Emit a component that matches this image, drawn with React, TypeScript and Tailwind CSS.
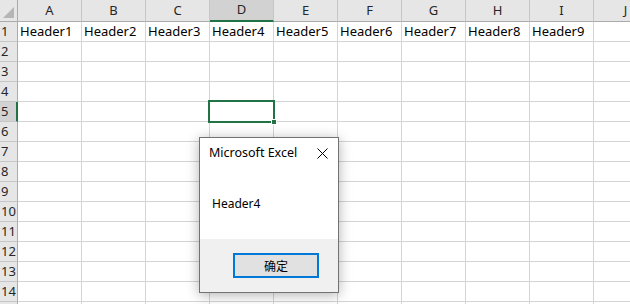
import React from "react";

const COLS = ["A", "B", "C", "D", "E", "F", "G", "H", "I", "J"];
const ROWS = Array.from({ length: 15 }, (_, i) => i + 1);

export default function App() {
  return (
    <div
      className="relative w-[630px] h-[304px] overflow-hidden bg-white"
      style={{ fontFamily: '"Noto Sans", "Noto Sans CJK SC", sans-serif' }}
    >
      {/* column header row */}
      <div className="flex h-[22px]">
        <div className="relative w-[18px] h-[22px] shrink-0 bg-[#e6e6e6] border-r border-b border-[#ababab]">
          <svg className="absolute left-[3px] top-[7px]" width="11" height="11" viewBox="0 0 11 11">
            <polygon points="0,11 11,11 11,0" fill="#b5b5b5" />
          </svg>
        </div>
        {COLS.map((c) => (
          <div
            key={c}
            className={
              c === "D"
                ? "w-[64px] h-[22px] shrink-0 bg-[#d2d2d2] border-r border-r-[#c6c6c6] border-b-2 border-b-[#217346] flex items-center justify-center text-[13px] text-[#262626]"
                : "w-[64px] h-[22px] shrink-0 bg-[#e6e6e6] border-r border-r-[#c6c6c6] border-b border-b-[#ababab] flex items-center justify-center text-[13px] text-[#262626]"
            }
          >
            {c}
          </div>
        ))}
      </div>

      {ROWS.map((r) => (
        <div key={r} className="flex h-[20px]">
          <div
            className={
              r === 5
                ? "w-[18px] h-[20px] shrink-0 bg-[#d2d2d2] border-r-2 border-r-[#217346] border-b border-b-[#c6c6c6] flex items-center text-[13px] text-[#262626] leading-none"
                : "w-[18px] h-[20px] shrink-0 bg-[#e6e6e6] border-r border-r-[#ababab] border-b border-b-[#c6c6c6] flex items-center text-[13px] text-[#262626] leading-none"
            }
          >
            <span className="pl-[1px]">{r < 15 ? r : ""}</span>
          </div>
          {COLS.map((c, i) => (
            <div
              key={c}
              className="w-[64px] h-[20px] shrink-0 border-r border-b border-[#d4d4d4] flex items-center pl-[2px] text-[13px] text-black whitespace-nowrap"
            >
              {r === 1 && i < 9 ? `Header${i + 1}` : ""}
            </div>
          ))}
        </div>
      ))}

      {/* selected cell D5 */}
      <div className="absolute left-[208px] top-[100px] w-[67px] h-[23px] border-2 border-[#217346]" />
      <div className="absolute left-[271px] top-[119px] w-[6px] h-[6px] bg-[#217346] border border-white" />

      {/* message box */}
      <div className="absolute left-[199px] top-[137px] w-[140px] h-[156px] border border-[#727272] bg-white flex flex-col shadow-[0_2px_12px_rgba(0,0,0,0.3)]">
        <div className="h-[30px] flex items-center justify-between pl-[9px] pr-[10px]">
          <span className="text-[12.5px] text-black">Microsoft Excel</span>
          <svg width="11" height="11" viewBox="0 0 11 11">
            <path d="M0.5 0.5 L10.5 10.5 M10.5 0.5 L0.5 10.5" stroke="#000" strokeWidth="1" />
          </svg>
        </div>
        <div className="h-[71px] pl-[12px] pt-[28px] text-[12px] leading-[16px] text-black">
          Header4
        </div>
        <div className="flex-1 bg-[#f0f0f0] pt-[14px] pl-[33px]">
          <div
            className="w-[86px] h-[25px] border-2 border-[#0078d7] bg-[#e1e1e1] flex items-center justify-center text-[12px] text-black"
            style={{ fontFamily: '"Noto Sans CJK SC", sans-serif' }}
          >
            确定
          </div>
        </div>
      </div>
    </div>
  );
}
